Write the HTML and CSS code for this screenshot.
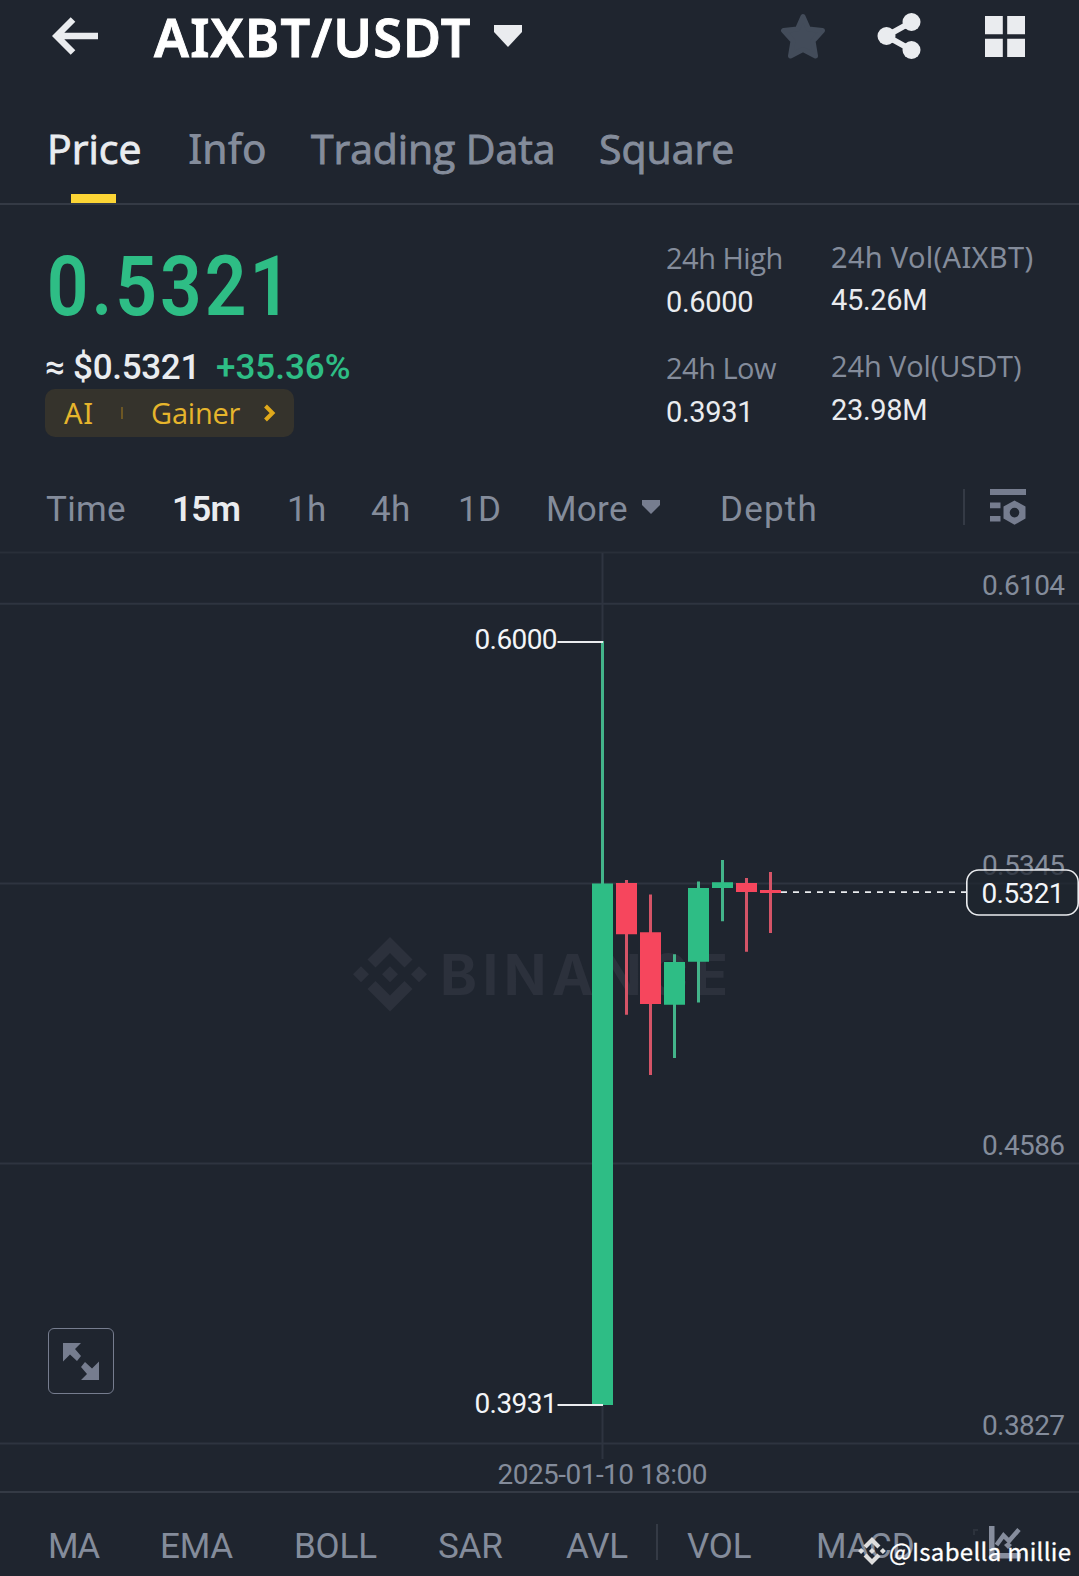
FILE: index.html
```html
<!DOCTYPE html>
<html lang="en">
<head>
<meta charset="utf-8">
<title>AIXBT/USDT</title>
<link rel="stylesheet" href="styles.css">
</head>
<body>
<main class="screen">
  <header class="topbar">
    <svg class="back" width="48" height="38" viewBox="0 0 48 38" fill="none" stroke="#eaecef" stroke-width="6.5"><path d="M46 19H5M21 2.500 4.500 19 21 35.500"/></svg>
    <h1 class="pair">AIXBT/USDT</h1>
    <svg class="caret" width="28" height="22" viewBox="0 0 28 22" fill="#eaecef"><path d="M0 0H28V7L14 22 0 7Z"/></svg>
    <svg class="star" width="46" height="46" viewBox="0 0 46 46" fill="#434c5a" stroke="#434c5a" stroke-width="5" stroke-linejoin="round"><path d="M23 3.500 28.500 16 42.500 17.500 33 28 35.500 43 23 36.500 10.500 43 13 28 3.500 17.500 17.500 16Z"/></svg>
    <svg class="share" width="44" height="46" viewBox="0 0 44 46" fill="#eaecef"><path d="M34.500 9 9.500 23 34.500 37" fill="none" stroke="#eaecef" stroke-width="6"/><circle cx="9.500" cy="23" r="9"/><circle cx="34.500" cy="9" r="9"/><circle cx="34.500" cy="37" r="9"/></svg>
    <svg class="apps" width="40" height="41" viewBox="0 0 40 41" fill="#eaecef"><path d="M0 0H17.800V18.300H0ZM22.200 0H40V18.300H22.200ZM0 22.700H17.800V41H0ZM22.200 22.700H40V41H22.200Z"/></svg>
  </header>

  <nav class="tabs">
    <span class="tab active">Price</span>
    <span class="tab info">Info</span>
    <span class="tab data">Trading Data</span>
    <span class="tab square">Square</span>
  </nav>

  <section class="summary">
    <div class="quote">
      <div class="last">0.5321</div>
      <div class="sub"><span class="usd">≈ $0.5321</span><span class="change">+35.36%</span></div>
      <div class="tags">
        <span class="tag-ai">AI</span><i class="tag-sep"></i><span class="tag-gainer">Gainer</span>
        <svg width="12" height="18" viewBox="0 0 12 18" fill="none" stroke="#e0a91b" stroke-width="4"><path d="M1.500 2 8.500 9 1.500 16"/></svg>
      </div>
    </div>
    <dl class="stats">
      <div><dt class="high">24h High</dt><dd>0.6000</dd></div>
      <div><dt class="low">24h Low</dt><dd>0.3931</dd></div>
    </dl>
    <dl class="stats volume">
      <div><dt class="va">24h Vol(AIXBT)</dt><dd>45.26M</dd></div>
      <div><dt class="vu">24h Vol(USDT)</dt><dd>23.98M</dd></div>
    </dl>
  </section>

  <nav class="frames">
    <span>Time</span><b>15m</b><span>1h</span><span>4h</span><span>1D</span>
    <span class="more">More<svg width="18" height="14" viewBox="0 0 18 14" fill="#767d8f"><path d="M0 0H18V5L9 14 0 5Z"/></svg></span>
    <span class="depth">Depth</span>
    <i class="rule"></i>
    <svg width="36" height="37" viewBox="0 0 36 37" fill="#767d8f"><path d="M0 1H36V7H0ZM0 14.500H10.500V20.200H0ZM0 28H10.500V33.500H0Z"/><path fill-rule="evenodd" d="M24.500 12.500 35.500 18.500V30.500L24.500 36.800 13.500 30.500V18.500ZM24.500 19.800A4.800 4.800 0 1 0 24.500 29.400 4.800 4.800 0 1 0 24.500 19.800Z"/></svg>
  </nav>

  <section class="chart">
    <svg class="plot" width="1079" height="942" viewBox="0 551 1079 942">
      <g class="grid">
        <path class="faint" d="M0 552.500H1079"/>
        <path d="M0 603.700H1079M0 883.500H1079M0 1163.500H1079M0 1443.500H1079M602.500 553V1459"/>
        <path class="strong" d="M0 1492H1079"/>
      </g>
      <g class="brand">
        <path d="M390 937 412.500 959.500 404.500 967.500 390 953 375.500 967.500 367.500 959.500ZM390 1011.500 412.500 989 404.500 981 390 995.500 375.500 981 367.500 989ZM361 966.300 369 974.300 361 982.300 353 974.300ZM419 966.300 427 974.300 419 982.300 411 974.300ZM390 966.300 398 974.300 390 982.300 382 974.300Z"/>
        <text x="440" y="995" textLength="288">BINANCE</text>
      </g>
      <g class="up">
        <path class="wick" d="M602.500 641V884M674.500 954.300V1058M698.500 881.500V1002.500M722.500 860V921.300"/>
        <path d="M592 883.500H613V1405H592ZM664 962H685V1004.700H664ZM688 888H709V961.700H688ZM712 882.300H733V888H712Z"/>
      </g>
      <g class="down">
        <path class="wick" d="M626.500 880V1014.700M650.500 894.500V1075M746.500 878V951.700M770.500 872V933"/>
        <path d="M616 883H637V934.200H616ZM640 932.300H661V1004H640ZM736 883H757V892H736ZM760 890H781V893H760Z"/>
      </g>
      <path class="leader" d="M557.500 642H603M557.500 1405H603"/>
      <g class="axis">
        <text x="982" y="595" textLength="83">0.6104</text>
        <text x="982" y="874.700" textLength="83">0.5345</text>
        <text x="982" y="1154.700" textLength="83">0.4586</text>
        <text x="982" y="1434.700" textLength="83">0.3827</text>
        <text x="497.500" y="1484" textLength="210">2025-01-10 18:00</text>
      </g>
      <path class="dash" d="M781 892.200H966"/>
      <rect class="marker" x="966.800" y="870" width="111.400" height="45" rx="12"/>
      <g class="value">
        <text x="474.500" y="648.700" textLength="83">0.6000</text>
        <text x="474.500" y="1412.700" textLength="83">0.3931</text>
        <text x="981.500" y="903" textLength="83">0.5321</text>
      </g>
    </svg>
    <div class="expand"><svg width="36" height="37" viewBox="0 0 36 37" fill="#767d8f"><path d="M0 0H18L12 6 18 13 14 18 7 11.500 0 18.500ZM36 37H18L24 31 18 24 22 19 29 25.500 36 18.500Z"/></svg></div>
  </section>

  <nav class="indicators">
    <span>MA</span><span>EMA</span><span>BOLL</span><span>SAR</span><span>AVL</span>
    <i class="rule"></i>
    <span>VOL</span><span>MACD</span>
    <i class="edge"></i>
    <svg width="33" height="33" viewBox="0 0 33 33" fill="#868d9d"><path d="M0 0H5.500V27H32V32.500H0Z"/><path d="M7.500 19 14.500 9.500 20 15 30 3.500" fill="none" stroke="#868d9d" stroke-width="4.500"/><path d="M15 19 19 16 23 19 19 23Z"/></svg>
  </nav>
  <div class="credit">
    <svg width="28" height="28" viewBox="353 937 74 74.500" fill="#dedede"><path d="M390 937 412.500 959.500 404.500 967.500 390 953 375.500 967.500 367.500 959.500ZM390 1011.500 412.500 989 404.500 981 390 995.500 375.500 981 367.500 989ZM361 966.300 369 974.300 361 982.300 353 974.300ZM419 966.300 427 974.300 419 982.300 411 974.300ZM390 966.300 398 974.300 390 982.300 382 974.300Z"/></svg>
    <span>@Isabella millie</span>
  </div>
</main>
</body>
</html>
```
FILE: styles.css
```css
* { box-sizing: border-box; margin: 0; padding: 0; }
body { background: #1f252f; }
svg { display: block; flex: none; }

.screen {
  position: relative;
  width: 1079px;
  height: 1576px;
  overflow: hidden;
  background: #1f252f;
  color: #848c9b;
  font-family: Roboto, sans-serif;
  white-space: nowrap;
}

.topbar {
  display: grid;
  grid-template-columns: 102px 340px 286px 97px 108px 1fr;
  align-items: center;
  height: 70px;
  padding-left: 52px;
}
.pair {
  padding-top: 2px;
  color: #fff;
  font: 600 52px/70px "Noto Sans", sans-serif;
  letter-spacing: 1.2px;
  -webkit-text-stroke: 0.9px;
}

.tabs {
  display: grid;
  grid-template-columns: 141px 123px 288px 1fr;
  height: 135px;
  padding: 48px 0 0 47px;
  border-bottom: 2px solid #343a45;
  font: 400 41px/60px "Open Sans", sans-serif;
  -webkit-text-stroke: 0.9px;
}
.tab.active {
  color: #eaecef;
  width: 92px;
}
.tab.active::after {
  content: "";
  display: block;
  width: 45px;
  height: 9px;
  margin: 16px 0 0 24px;
  background: #fcd535;
}
.tab.info {
  font: 500 41px/60px "Noto Sans", sans-serif;
  -webkit-text-stroke: 0;
  letter-spacing: -0.4px;
}
.tab.data { letter-spacing: -0.1px; }

.summary {
  display: grid;
  grid-template-columns: 621px 165px 1fr;
  height: 255px;
  padding-left: 45px;
}
.last {
  height: 100px;
  padding-top: 32px;
  color: #2ebd85;
  font-size: 83px;
  font-weight: 600;
  line-height: 100px;
  letter-spacing: 3.4px;
  transform: scaleX(0.88);
  transform-origin: 0 0;
  text-indent: 2px;
}
.sub {
  display: flex;
  margin-top: 41px;
  font-size: 35px;
  font-weight: 500;
  line-height: 44px;
  letter-spacing: -0.3px;
}
.usd { width: 171px; color: #eaecef; }
.change { color: #2ebd85; letter-spacing: 0; }
.tags {
  display: grid;
  grid-template-columns: 57px 30px 113px 1fr;
  align-items: center;
  width: 249px;
  height: 48px;
  margin-top: -1px;
  padding-left: 19px;
  border-radius: 10px;
  background: #35332c;
  color: #e6b52c;
  font: 400 29px/48px "Open Sans", sans-serif;
}
.tag-ai { font-family: "Noto Sans", sans-serif; letter-spacing: 0.6px; }
.tag-gainer { letter-spacing: -0.2px; }
.tag-sep { width: 2px; height: 12px; background: #6d5724; }

.stats { padding-top: 33px; }
.stats.volume { padding-top: 31px; }
.stats > div { height: 110px; }
.stats dt {
  height: 42px;
  font: 400 29px/40px "Open Sans", sans-serif;
  letter-spacing: -0.5px;
}
.stats dt.va {
  padding-top: 1px;
  font-family: "Noto Sans", sans-serif;
  letter-spacing: 0.3px;
}
.stats dt.vu { letter-spacing: -0.1px; }
.stats dd {
  color: #eaecef;
  font-size: 29px;
  line-height: 44px;
  letter-spacing: -0.3px;
}

.frames {
  display: grid;
  grid-template-columns: 126px 115px 84px 87px 88px 174px 243px 27px 1fr;
  align-items: center;
  height: 91px;
  padding: 2px 0 0 46px;
  font-size: 35px;
  line-height: 48px;
  letter-spacing: 0.3px;
}
.frames > span, .frames > b { padding-top: 6px; }
.frames b { color: #eaecef; font-weight: 600; letter-spacing: -0.8px; }
.frames .depth { letter-spacing: 1.2px; }
.more { display: flex; align-items: center; gap: 14px; }
.more svg { margin-top: -6px; }
.rule { width: 2px; height: 36px; background: #343a45; }

.chart { position: relative; height: 942px; }
.grid path { fill: none; stroke: #2e3440; stroke-width: 2; }
.grid .faint { stroke: #292f39; }
.grid .strong { stroke: #343a45; }
.brand { fill: #2c313c; }
.brand text { font: 700 56px Inter, sans-serif; }
.up { fill: #2ebd85; }
.up .wick { stroke: #43b48a; }
.down { fill: #f6465d; }
.down .wick { stroke: #d45467; }
.wick { fill: none; stroke-width: 3; }
.leader { fill: none; stroke: #eaecef; stroke-width: 1.8; }
.dash { fill: none; stroke: #eaecef; stroke-width: 1.7; stroke-dasharray: 6 6; }
.marker { fill: #1f252f; fill-opacity: 0.75; stroke: #eaecef; stroke-width: 1.6; }
.axis { fill: #848c9b; font-size: 28px; }
.value { fill: #f3f5f8; font-size: 28px; }
.expand {
  position: absolute;
  left: 48px;
  top: 777px;
  display: grid;
  place-items: center;
  width: 66px;
  height: 66px;
  border: 1.5px solid #767d8f;
  border-radius: 6px;
}

.indicators {
  display: grid;
  grid-template-columns: 112px 134px 143px 129px 90px 31px 129px 157px 16px 1fr;
  align-items: center;
  height: 83px;
  padding: 25px 0 0 48px;
  font-size: 35px;
  line-height: 48px;
  letter-spacing: -0.2px;
}
.indicators > span:first-child { letter-spacing: -1.5px; }
.indicators > span:nth-child(4) { padding-left: 1px; }
.indicators svg { margin-top: -10px; }
.indicators .rule { margin-top: -11px; }
.edge { width: 5px; height: 6px; margin-top: -30px; border: solid #2c323c; border-width: 2px 0 0 2px; }

.credit {
  position: absolute;
  left: 858px;
  top: 1532px;
  display: flex;
  align-items: center;
  gap: 3px;
  color: #fff;
  font: 400 24px/38px "Noto Sans CJK SC", sans-serif;
  letter-spacing: 0.3px;
  -webkit-text-stroke: 0.3px;
}
```
